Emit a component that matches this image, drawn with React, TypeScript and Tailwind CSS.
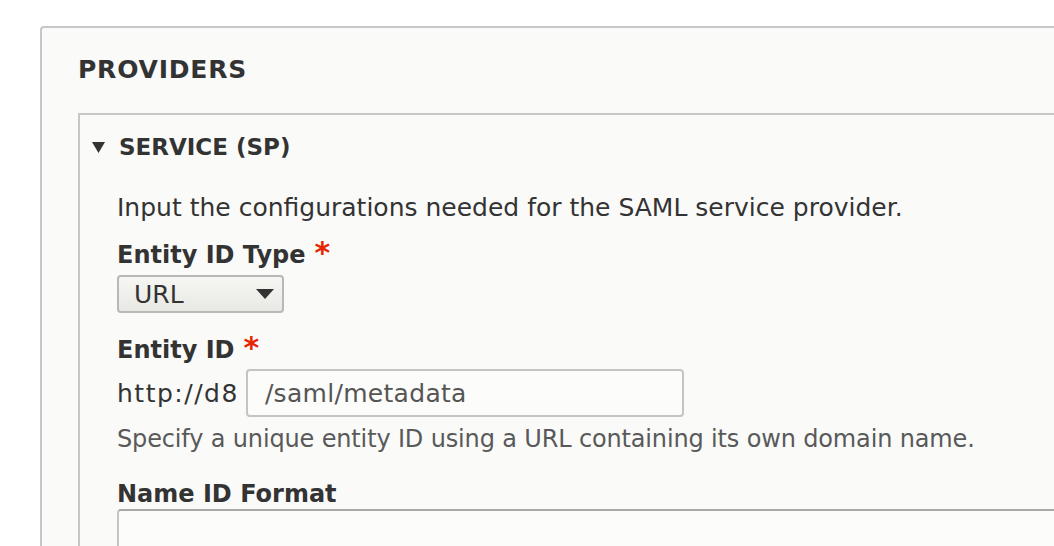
import React from 'react';

const Required = () => (
  <span className="text-[#e62600] text-[30px] leading-none align-top ml-[9px] relative top-[-2px]">*</span>
);

const App: React.FC = () => {
  return (
    <div
      className="h-[546px] w-full overflow-hidden bg-white text-[#333333]"
      style={{ fontFamily: '"DejaVu Sans", "Open Sans", sans-serif' }}
    >
      {/* Providers fieldset */}
      <div className="ml-[40px] mt-[26px] w-[1100px] border-2 border-[#c7c7c7] rounded-[4px] bg-[#fafaf9] pl-[36px] pt-[25px]">
        <div className="text-[25px] font-bold uppercase tracking-[0.8px] leading-[34px] text-[#333]">
          Providers
        </div>

        {/* Service details */}
        <div className="mt-[26px] border-2 border-[#c7c7c7] bg-[#fafaf9] pl-[12px] pt-[15px] pb-10">
          <div className="flex items-center">
            <svg width="13" height="13" viewBox="0 0 13 13" className="mr-[14px]">
              <path d="M0 1 L13 1 L6.5 12 Z" fill="#333" />
            </svg>
            <span className="text-[23px] font-bold leading-[34px]">SERVICE (SP)</span>
          </div>

          <div className="pl-[25px]">
            <p className="mt-[27px] text-[25px] leading-[34px]">
              Input the configurations needed for the SAML service provider.
            </p>

            <div className="mt-[15px] text-[24px] font-bold leading-[30px]">
              Entity ID Type
              <Required />
            </div>
            <div className="mt-[5px] flex h-[38px] w-[167px] items-center justify-between rounded-[4px] border-2 border-[#b8b8b8] bg-gradient-to-b from-[#f6f6f3] to-[#e8e8e4] pl-[15px] pr-[8px]">
              <span className="text-[25px] leading-none">URL</span>
              <svg width="18" height="12" viewBox="0 0 18 12">
                <path d="M0 1 L18 1 L9 11 Z" fill="#333" />
              </svg>
            </div>

            <div className="mt-[22px] text-[24px] font-bold leading-[30px]">
              Entity ID
              <Required />
            </div>
            <div className="mt-[4px] flex items-center">
              <span className="text-[25px] leading-none tracking-[1.5px]">http://d8</span>
              <div className="ml-[7px] flex h-[48px] w-[438px] items-center rounded-[4px] border-2 border-[#c4c4c4] bg-[#fcfcfa] pl-[17px]">
                <span className="text-[25px] leading-none text-[#555] tracking-[0.3px]">/saml/metadata</span>
              </div>
            </div>
            <p className="mt-[6px] text-[24px] leading-[32px] text-[#595959] tracking-[-0.15px]">
              Specify a unique entity ID using a URL containing its own domain name.
            </p>

            <div className="mt-[24px] text-[24px] font-bold leading-[30px]">Name ID Format</div>
            <div className="mt-[0px] h-[60px] w-[1000px] rounded-[4px] border-2 border-[#c4c4c4] border-t-[#a8a8a8] bg-[#fcfcfa]" />
          </div>
        </div>
      </div>
    </div>
  );
};

export default App;
